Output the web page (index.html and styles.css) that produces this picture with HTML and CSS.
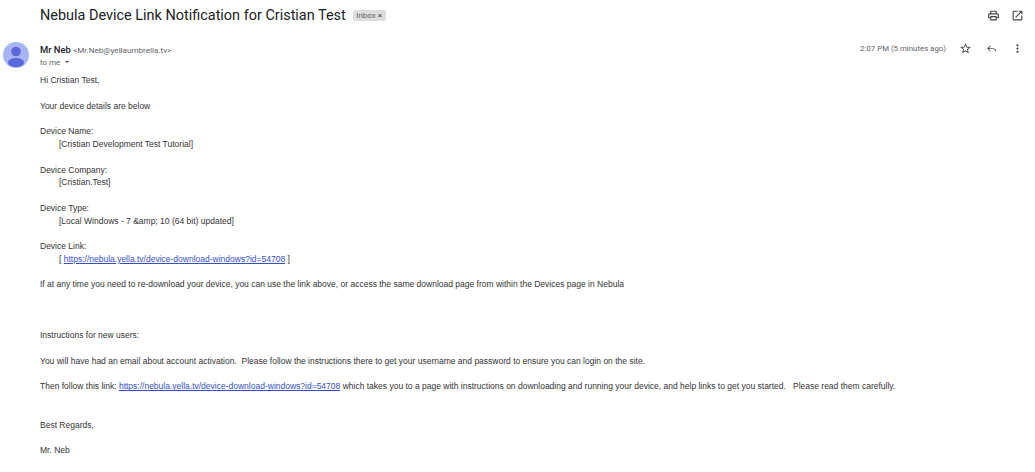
FILE: index.html
```html
<!DOCTYPE html>
<html lang="en">
<head>
<meta charset="utf-8">
<title>Nebula Device Link Notification for Cristian Test</title>
<link rel="stylesheet" href="styles.css">
</head>
<body>
<div class="subject-row">
  <div class="subject-main">
    <h1 class="subject">Nebula Device Link Notification for Cristian Test</h1>
    <span class="label">Inbox <span class="label-x">×</span></span>
  </div>
  <div class="subject-actions">
    <svg class="icon" viewBox="0 0 24 24"><path d="M19 8h-1V3H6v5H5c-1.66 0-3 1.34-3 3v6h4v4h12v-4h4v-6c0-1.66-1.34-3-3-3zM8 5h8v3H8V5zm8 14H8v-4h8v4zm4-4h-2v-2H6v2H4v-4c0-.55.45-1 1-1h14c.55 0 1 .45 1 1v4z"/></svg>
    <svg class="icon" viewBox="0 0 24 24"><path d="M19 19H5V5h7V3H5c-1.1 0-2 .9-2 2v14c0 1.1.9 2 2 2h14c1.1 0 2-.9 2-2v-7h-2v7zM14 3v2h3.59l-9.83 9.83 1.41 1.41L19 6.41V10h2V3h-7z"/></svg>
  </div>
</div>
<div class="message">
  <svg class="avatar" viewBox="0 0 26 26"><circle cx="13" cy="13" r="13" fill="#a8b5f3"/><circle cx="13" cy="9.5" r="4.8" fill="#5a68d8"/><ellipse cx="13" cy="20.5" rx="8" ry="4.6" fill="#5a68d8"/></svg>
  <div class="message-content">
    <div class="message-head">
      <div class="sender">
        <div class="from"><span class="name">Mr Neb</span> <span class="email">&lt;Mr.Neb@yellaumbrella.tv&gt;</span></div>
        <div class="to">to me <span class="caret"></span></div>
      </div>
      <div class="meta">
        <span class="time">2:07 PM (5 minutes ago)</span>
        <svg class="icon star" viewBox="0 0 24 24"><path d="M22 9.24l-7.19-.62L12 2 9.19 8.63 2 9.24l5.46 4.73L5.82 21 12 17.27 18.18 21l-1.63-7.03L22 9.24zM12 15.4l-3.76 2.27 1-4.28-3.32-2.88 4.38-.38L12 6.1l1.71 4.04 4.38.38-3.32 2.88 1 4.28L12 15.4z"/></svg>
        <svg class="icon reply" viewBox="0 0 24 24"><path d="M9.5 6.5 4 12l5.5 5.500 1-1L7 13h6.500c3 0 5 1.500 6 4.500l1.500-.5c-1-4-3.500-5.500-7.500-5.500H7l3.500-3.500z"/></svg>
        <svg class="icon more" viewBox="0 0 24 24"><path d="M12 8c1.100 0 2-.9 2-2s-.9-2-2-2-2 .9-2 2 .9 2 2 2zm0 2c-1.100 0-2 .9-2 2s.9 2 2 2 2-.9 2-2-.9-2-2-2zm0 6c-1.100 0-2 .9-2 2s.9 2 2 2 2-.9 2-2-.9-2-2-2z"/></svg>
      </div>
    </div>
    <div class="body-text">
      <p>Hi Cristian Test,</p>
      <p>Your device details are below</p>
      <p>Device Name:<br><span class="indent">[Cristian Development Test Tutorial]</span></p>
      <p>Device Company:<br><span class="indent">[Cristian.Test]</span></p>
      <p>Device Type:<br><span class="indent">[Local Windows - 7 &amp;amp; 10 (64 bit) updated]</span></p>
      <p>Device Link:<br><span class="indent">[ <a href="#">https://nebula.yella.tv/device-download-windows?id=54708</a> ]</span></p>
      <p class="gap-after">If at any time you need to re-download your device, you can use the link above, or access the same download page from within the Devices page in Nebula</p>
      <p>Instructions for new users:</p>
      <p>You will have had an email about account activation.&nbsp; Please follow the instructions there to get your username and password to ensure you can login on the site.</p>
      <p class="gap-after-small">Then follow this link: <a href="#">https://nebula.yella.tv/device-download-windows?id=54708</a> which takes you to a page with instructions on downloading and running your device, and help links to get you started.&nbsp;&nbsp; Please read them carefully.</p>
      <p>Best Regards,</p>
      <p>Mr. Neb</p>
    </div>
  </div>
</div>
</body>
</html>
```
FILE: styles.css
```css
html, body {
  margin: 0;
  padding: 0;
  background: #fff;
  overflow: hidden;
}
body {
  width: 1035px;
  height: 472px;
  font-family: "Liberation Sans", Arial, sans-serif;
  color: #333;
}
.subject-row {
  display: flex;
  justify-content: space-between;
  align-items: center;
  height: 30px;
  padding: 0 11px 0 40px;
}
.subject-main {
  display: flex;
  align-items: center;
  gap: 7px;
}
.subject {
  margin: 0;
  font-family: Roboto, "Liberation Sans", sans-serif;
  font-size: 14.450px;
  font-weight: 400;
  color: #202124;
}
.label {
  display: inline-block;
  background: #ddd;
  color: #666;
  font-family: Roboto, "Liberation Sans", sans-serif;
  font-size: 8px;
  line-height: 11px;
  padding: 0 3.500px;
  border-radius: 2px;
}
.label-x { color: #444; }
.subject-actions {
  display: flex;
  gap: 11px;
}
.icon {
  display: block;
  width: 13px;
  height: 13px;
  fill: #444;
}
.message {
  display: flex;
  padding: 12px 0 0 3px;
}
.avatar {
  width: 26px;
  height: 26px;
  flex: none;
}
.message-content {
  flex: 1;
  margin-left: 11px;
}
.message-head {
  display: flex;
  justify-content: space-between;
  height: 32.350px;
}
.sender { padding-top: 1.500px; }
.from {
  font-family: Roboto, "Liberation Sans", sans-serif;
  font-size: 9.400px;
  line-height: 12px;
}
.name { font-weight: 500; color: #202124; }
.email { font-size: 8.100px; color: #5f6368; }
.to {
  font-family: Roboto, "Liberation Sans", sans-serif;
  font-size: 8px;
  line-height: 13px;
  color: #5f6368;
}
.caret {
  display: inline-block;
  margin-left: 3px;
  vertical-align: middle;
  border-left: 2.500px solid transparent;
  border-right: 2.500px solid transparent;
  border-top: 2.500px solid #444;
}
.meta {
  display: flex;
  align-items: center;
  align-self: flex-start;
  height: 13px;
  padding-right: 11px;
}
.time {
  font-family: Roboto, "Liberation Sans", sans-serif;
  font-size: 7.850px;
  color: #5f6368;
  margin-right: 13px;
}
.meta .icon { margin-right: 13px; }
.meta .more { margin-right: 0; }
.body-text {
  font-size: 8.500px;
  line-height: 12.750px;
}
.body-text p { margin: 0 0 12.750px; }
.indent { margin-left: 19px; }
.body-text a { color: #3350c8; }
.gap-after { margin-bottom: 38.250px !important; }
.gap-after-small { margin-bottom: 25.500px !important; }
```
